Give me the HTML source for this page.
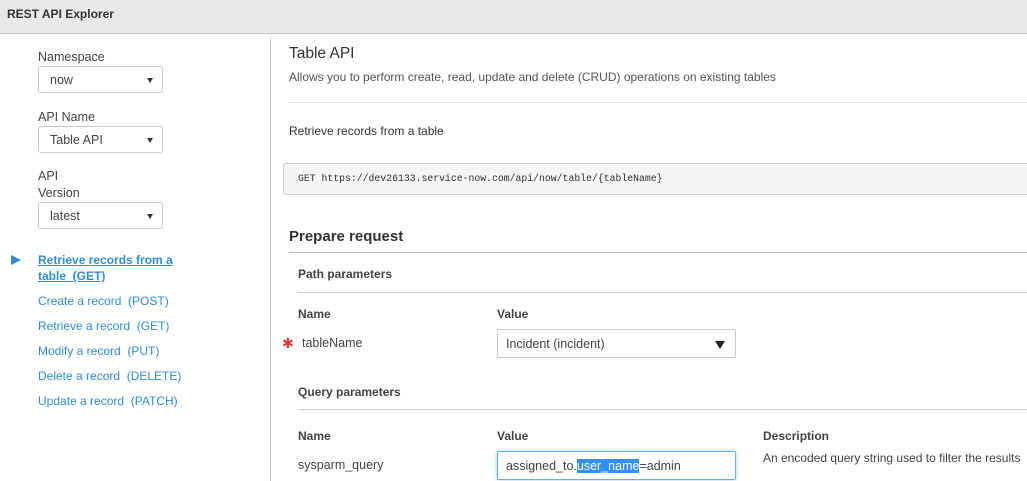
<!DOCTYPE html>
<html><head><meta charset="utf-8"><style>
*{margin:0;padding:0;box-sizing:border-box}
body{width:1027px;height:481px;overflow:hidden;background:#fff;font-family:"Liberation Sans",Arial,sans-serif;font-size:12px;color:#333;position:relative}
.a{position:absolute;white-space:nowrap}
.sel{position:absolute;border:1px solid #ccc;border-radius:3px;background:#fff;height:27px;width:125px;padding:0 11px;line-height:27px;font-size:12.5px;color:#444}
.sel:after{content:"";position:absolute;right:9px;top:11px;border-left:3px solid transparent;border-right:3px solid transparent;border-top:5px solid #333}
.lnk{position:absolute;left:38px;color:#2f8ddb;font-size:12px;white-space:nowrap}
.hr{position:absolute;height:1px;right:0}
.b{font-weight:bold;color:#444}
</style></head><body>
<div class="a" style="left:0;top:0;width:1027px;height:34px;background:#e7e8ea;border-bottom:1px solid #c8c8c8"></div>
<div class="a b" style="left:7px;top:7px;font-size:12px;color:#333">REST API Explorer</div>

<div class="a" style="left:38px;top:50px;font-size:12.5px;color:#444">Namespace</div>
<div class="sel" style="left:38px;top:66px">now</div>
<div class="a" style="left:38px;top:110px;font-size:12.5px;color:#444">API Name</div>
<div class="sel" style="left:38px;top:126px">Table API</div>
<div class="a" style="left:38px;top:169px;font-size:12.5px;color:#444">API</div>
<div class="a" style="left:38px;top:186px;font-size:12.5px;color:#444">Version</div>
<div class="sel" style="left:38px;top:202px">latest</div>

<div class="a" style="left:11px;top:255px;width:0;height:0;border-top:5px solid transparent;border-bottom:5px solid transparent;border-left:10px solid #2f8ddb"></div>
<div class="lnk" style="top:253px;font-weight:bold;text-decoration:underline">Retrieve records from a</div>
<div class="lnk" style="top:269px;font-weight:bold;text-decoration:underline">table&nbsp; (GET)</div>
<div class="lnk" style="top:294px">Create a record&nbsp; (POST)</div>
<div class="lnk" style="top:319px">Retrieve a record&nbsp; (GET)</div>
<div class="lnk" style="top:344px">Modify a record&nbsp; (PUT)</div>
<div class="lnk" style="top:369px">Delete a record&nbsp; (DELETE)</div>
<div class="lnk" style="top:394px">Update a record&nbsp; (PATCH)</div>

<div class="a" style="left:270px;top:38px;width:1px;height:443px;background:#ccc"></div>

<div class="a" style="left:289px;top:45px;font-size:15.5px;color:#333">Table API</div>
<div class="a" style="left:289px;top:70px;font-size:12px;color:#555">Allows you to perform create, read, update and delete (CRUD) operations on existing tables</div>
<div class="hr" style="left:289px;top:102px;background:#e3e3e3"></div>
<div class="a" style="left:289px;top:124px;font-size:12px;color:#333">Retrieve records from a table</div>
<div class="a" style="left:283px;top:163px;width:750px;height:32px;background:#f5f5f5;border:1px solid #ccc;border-radius:3px"></div>
<div class="a" style="left:298px;top:173px;font-family:'Liberation Mono',monospace;font-size:9.8px;color:#333">GET https://dev26133.service-now.com/api/now/table/{tableName}</div>

<div class="a b" style="left:289px;top:228px;font-size:15px;color:#333">Prepare request</div>
<div class="hr" style="left:289px;top:252px;background:#bbb"></div>
<div class="a" style="left:298px;top:267px;font-weight:bold;color:#444;font-size:12px">Path parameters</div>
<div class="hr" style="left:298px;top:292px;background:#ccc"></div>
<div class="a b" style="left:298px;top:307px">Name</div>
<div class="a b" style="left:497px;top:307px">Value</div>
<div class="a" style="left:282px;top:336px;color:#e53935;font-size:14px;line-height:14px">✱</div>
<div class="a" style="left:302px;top:336px;font-size:12.5px;color:#444">tableName</div>
<div class="a" style="left:497px;top:329px;width:239px;height:29px;border:1px solid #ccc;border-radius:2px;padding-left:8px;line-height:28px;font-size:12.5px;color:#444">Incident (incident)<span style="position:absolute;right:10px;top:11px;border-left:5px solid transparent;border-right:5px solid transparent;border-top:8px solid #222"></span></div>

<div class="a" style="left:298px;top:385px;font-weight:bold;color:#444">Query parameters</div>
<div class="hr" style="left:298px;top:409px;background:#ccc"></div>
<div class="a b" style="left:298px;top:429px">Name</div>
<div class="a b" style="left:497px;top:429px">Value</div>
<div class="a b" style="left:763px;top:429px">Description</div>
<div class="a" style="left:298px;top:458px;font-size:12.5px;color:#444">sysparm_query</div>
<div class="a" style="left:497px;top:451px;width:239px;height:29px;border:1px solid #66afe9;border-radius:2px;box-shadow:0 0 5px rgba(102,175,233,.6);padding-left:8px;line-height:28px;font-size:12.5px;color:#444">assigned_to.<span style="background:#3390ff;color:#fff">user_name</span>=admin</div>
<div class="a" style="left:763px;top:451px;font-size:12px;color:#444">An encoded query string used to filter the results</div>
</body></html>
